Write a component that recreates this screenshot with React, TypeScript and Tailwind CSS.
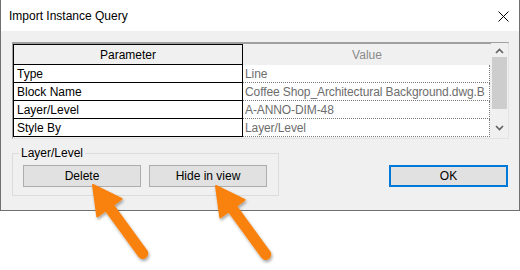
import type { ReactNode } from "react";

const rows = [
  { name: "Type", value: "Line" },
  { name: "Block Name", value: "Coffee Shop_Architectural Background.dwg.B" },
  { name: "Layer/Level", value: "A-ANNO-DIM-48" },
  { name: "Style By", value: "Layer/Level" },
];

function Chevron({ up }: { up?: boolean }) {
  return (
    <svg width="9" height="6" viewBox="0 0 9 6" className="block">
      <path
        d={up ? "M1 5 L4.5 1.5 L8 5" : "M1 1 L4.5 4.5 L8 1"}
        fill="none"
        stroke="#606060"
        strokeWidth="1.6"
      />
    </svg>
  );
}

function WinButton({ children, primary }: { children: ReactNode; primary?: boolean }) {
  return (
    <button
      className={
        primary
          ? "w-[119px] h-[22px] bg-[#e1e1e1] border-2 border-[#0078d7] text-black leading-none"
          : "w-[118px] h-[22px] bg-[#e1e1e1] border border-[#adadad] text-black leading-none"
      }
    >
      {children}
    </button>
  );
}

function Arrow() {
  return (
    <g>
      <line x1="106" y1="203" x2="142.8" y2="253.5" stroke="#f8820f" strokeWidth="11" strokeLinecap="round" />
      <polygon points="93,185 121.6,198.9 97.3,216.5" fill="#f8820f" strokeLinejoin="round" stroke="#f8820f" strokeWidth="2" />
    </g>
  );
}

export default function App() {
  return (
    <div className="relative w-[520px] h-[270px] overflow-hidden bg-white font-['Liberation_Sans',Arial,sans-serif] text-[12px] text-black">
      <div className="w-[520px] h-[211px] flex flex-col border-x border-b border-[#707070]">
        <div className="h-[31px] shrink-0 bg-white flex items-center justify-between pl-[8px] pr-[10px] pt-[1px]">
          <span>Import Instance Query</span>
          <svg width="11" height="11" viewBox="0 0 11 11" className="block">
            <path d="M0.5 0.5 L10.5 10.5 M10.5 0.5 L0.5 10.5" stroke="#000" strokeWidth="1" />
          </svg>
        </div>

        <div className="flex-1 bg-[#f0f0f0] pl-[11px] pr-[10px] pt-[11px]">
          {/* property grid */}
          <div className="h-[97px] flex border-t-2 border-l border-[#a0a0a0] border-r border-r-[#e3e3e3] border-b border-b-[#e3e3e3]">
            <div className="w-[230px] self-start flex flex-col border-l border-t border-r border-black">
              <div className="h-[20px] bg-[#f0f0f0] border-b border-black flex items-center justify-center">
                Parameter
              </div>
              {rows.map((r) => (
                <div key={r.name} className="h-[18px] bg-white border-b border-black flex items-center pl-[3px]">
                  {r.name}
                </div>
              ))}
            </div>
            <div className="flex-1 min-w-0 flex flex-col">
              <div className="h-[21px] bg-[#f0f0f0] flex items-center justify-center text-[#8a8a8a]">Value</div>
              {rows.map((r) => (
                <div
                  key={r.name}
                  className="h-[18px] bg-white border-b border-r border-dotted border-[#7a7a7a] flex items-center pl-[2px] text-[#6d6d6d] whitespace-nowrap mr-[1px] tracking-[-0.1px]"
                >
                  {r.value}
                </div>
              ))}
            </div>
            <div className="w-[17px] -mt-[1px] bg-[#f0f0f0] flex flex-col items-center">
              <div className="h-[14px] w-full flex items-center justify-center pt-[2px]">
                <Chevron up />
              </div>
              <div className="w-[15px] h-[52px] bg-[#cdcdcd]" />
              <div className="flex-1" />
              <div className="h-[16px] w-full flex items-center justify-center pb-[4px]">
                <Chevron />
              </div>
            </div>
          </div>

          {/* bottom row */}
          <div className="flex items-start justify-between mt-[6px]">
            <fieldset className="border border-[#dcdcdc] pb-[8px]">
              <legend className="ml-[6px] px-[2px] leading-[16px]">Layer/Level</legend>
              <div className="flex gap-[8px] pl-[10px] pr-[11px] pt-[4px]">
                <WinButton>Delete</WinButton>
                <WinButton>Hide in view</WinButton>
              </div>
            </fieldset>
            <div className="mt-[20px] mr-[1px]">
              <WinButton primary>OK</WinButton>
            </div>
          </div>
        </div>
      </div>

      <svg className="absolute inset-0 pointer-events-none" width="520" height="270" viewBox="0 0 520 270">
        <defs>
          <filter id="sh" x="-20%" y="-20%" width="140%" height="140%">
            <feDropShadow dx="1" dy="2" stdDeviation="1.8" floodColor="#000" floodOpacity="0.35" />
          </filter>
        </defs>
        <g filter="url(#sh)">
          <Arrow />
          <g transform="translate(123 1)">
            <Arrow />
          </g>
        </g>
      </svg>
    </div>
  );
}
